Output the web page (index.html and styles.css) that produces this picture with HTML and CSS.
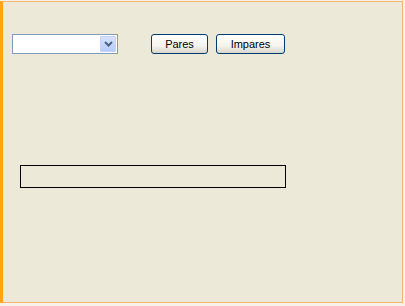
FILE: index.html
```html
<!DOCTYPE html>
<html>
<head>
<meta charset="utf-8">
<link rel="stylesheet" href="styles.css">
</head>
<body>
<div class="frame">
  <div class="toolbar">
    <div class="combo">
      <div class="combo-field"></div>
      <div class="combo-btn">
        <svg width="9" height="6" viewBox="0 0 9 6"><path d="M1 1 L4.5 4.5 L8 1" fill="none" stroke="#4d6185" stroke-width="2"/></svg>
      </div>
    </div>
    <div class="buttons">
      <button class="btn btn-pares">Pares</button>
      <button class="btn btn-impares">Impares</button>
    </div>
  </div>
  <div class="output"></div>
</div>
</body>
</html>
```
FILE: styles.css
```css
html, body {
  margin: 0;
  padding: 0;
  background: #f7f1ea;
}
.frame {
  box-sizing: border-box;
  margin-top: 1px;
  width: 403px;
  height: 302px;
  background: #ece9d8;
  border-left: 3px solid #ffa510;
  border-top: 1px solid #f6b870;
  border-right: 1px solid #f3b46c;
  border-bottom: 1px solid #f3b46c;
  padding: 32px 0 0 9px;
  font-family: "Liberation Sans", Arial, sans-serif;
}
.toolbar {
  display: flex;
  align-items: flex-start;
}
.combo {
  box-sizing: border-box;
  width: 106px;
  height: 20px;
  border: 1px solid #7f9db9;
  background: #fff;
  display: flex;
  padding: 1px;
}
.combo-field {
  flex: 1;
}
.combo-btn {
  width: 16px;
  height: 16px;
  box-sizing: border-box;
  background: linear-gradient(#d6e3fd, #b7cbf6);
  border: 1px solid #c3d3f7;
  border-radius: 1px;
  display: flex;
  align-items: center;
  justify-content: center;
}
.buttons {
  display: flex;
  gap: 8px;
  margin-left: 33px;
}
.btn {
  box-sizing: border-box;
  height: 20px;
  padding: 0;
  border: 1px solid #003c74;
  border-radius: 3px;
  background: linear-gradient(#ffffff 0%, #f4f3ee 60%, #d9d6c9 100%);
  font-family: "Liberation Sans", Arial, sans-serif;
  font-size: 11px;
  color: #000;
  line-height: 18px;
}
.btn-pares { width: 57px; }
.btn-impares { width: 69px; }
.output {
  box-sizing: border-box;
  width: 266px;
  height: 23px;
  border: 1px solid #000;
  margin-top: 111px;
  margin-left: 8px;
}
```
